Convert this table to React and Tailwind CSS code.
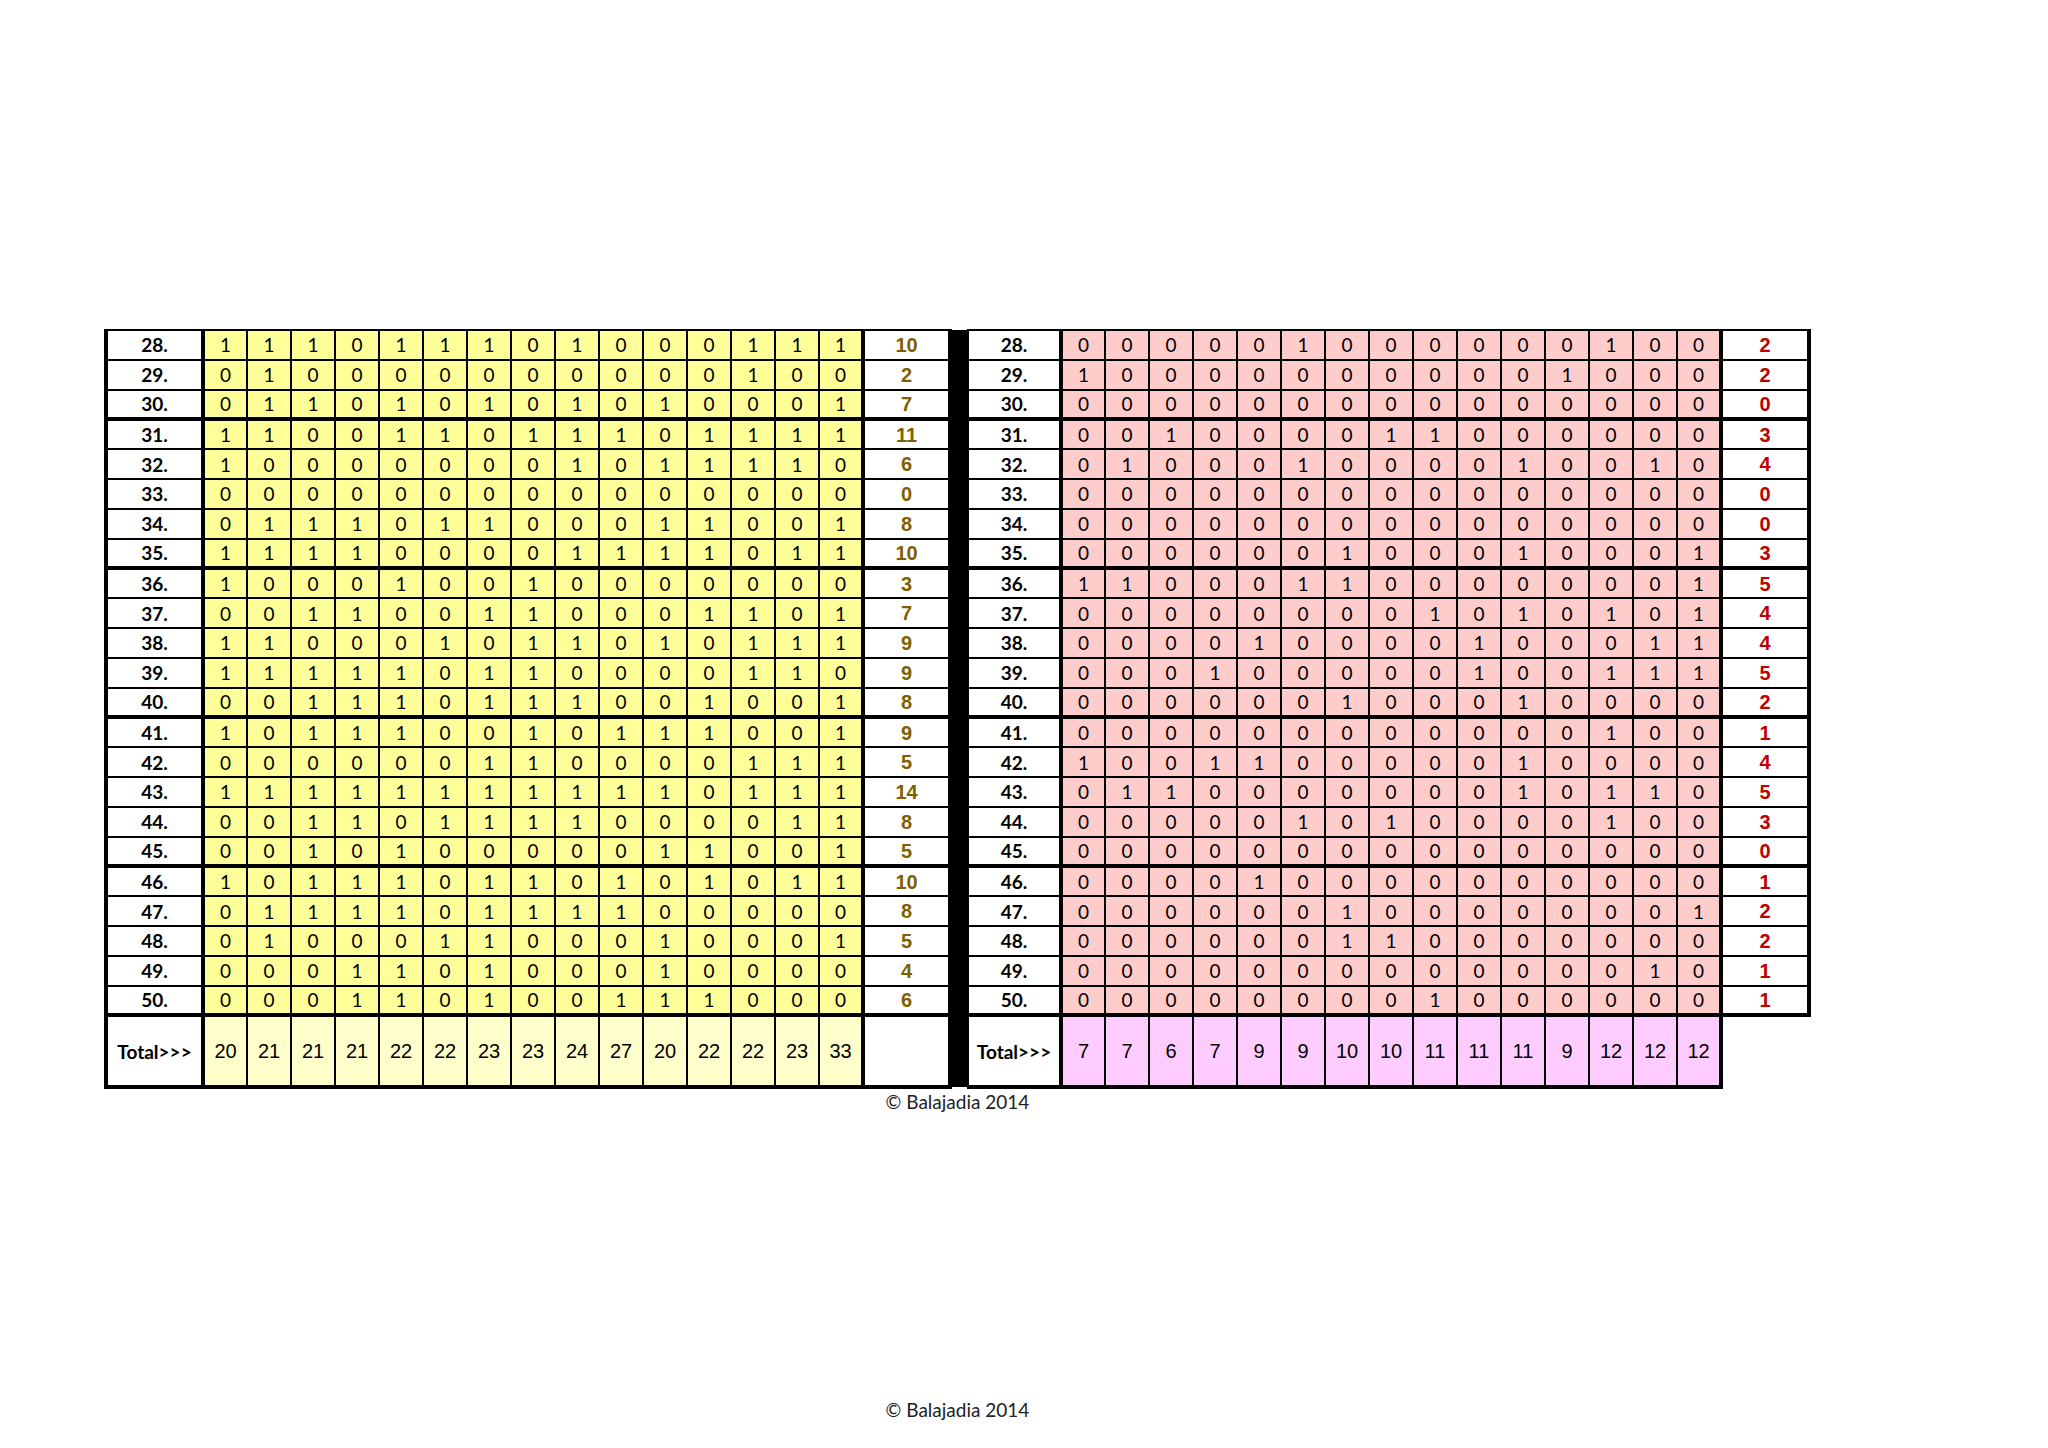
import React from "react";

const LEFT = [
  "111011101000111",
  "010000000000100",
  "011010101010001",
  "110011011101111",
  "100000001011110",
  "000000000000000",
  "011101100011001",
  "111100001111011",
  "100010010000000",
  "001100110001101",
  "110001011010111",
  "111110110000110",
  "001110111001001",
  "101110010111001",
  "000000110000111",
  "111111111110111",
  "001101111000011",
  "001010000011001",
  "101110110101011",
  "011110111100000",
  "010001100010001",
  "000110100010000",
  "000110100111000",
];

const RIGHT = [
  "000001000000100",
  "100000000001000",
  "000000000000000",
  "001000011000000",
  "010001000010010",
  "000000000000000",
  "000000000000000",
  "000000100010001",
  "110001100000001",
  "000000001010101",
  "000010000100011",
  "000100000100111",
  "000000100010000",
  "000000000000100",
  "100110000010000",
  "011000000010110",
  "000001010000100",
  "000000000000000",
  "000010000000000",
  "000000100000001",
  "000000110000000",
  "000000000000010",
  "000000001000000",
];

const LT = [20, 21, 21, 21, 22, 22, 23, 23, 24, 27, 20, 22, 22, 23, 33];
const RT = [7, 7, 6, 7, 9, 9, 10, 10, 11, 11, 11, 9, 12, 12, 12];

const GROUP_START = [3, 8, 13, 18];

const count = (s) => s.split("").filter((c) => c === "1").length;

const lato = { fontFamily: "Lato, 'Open Sans', sans-serif" };
const arial = { fontFamily: "'Liberation Sans', Arial, sans-serif" };
const narrow = { fontFamily: "'Liberation Sans Narrow', 'Liberation Sans', Arial, sans-serif" };

function Row({ i }) {
  const gs = GROUP_START.includes(i);
  const last = i === 22;
  const edge = gs ? " border-t-4" : last ? " border-b-4" : "";
  const label = `${28 + i}.`;
  return (
    <tr className="h-[29.8px]">
      <td
        className={
          "border-2 border-black border-l-4 border-r-4 bg-white text-center font-bold text-[19px] leading-none" +
          edge
        }
        style={lato}
      >
        {label}
      </td>
      {LEFT[i].split("").map((c, k) => (
        <td
          key={k}
          className={
            "border-2 border-black bg-[#ffff99] text-center text-[19px] leading-none text-black" +
            edge
          }
          style={lato}
        >
          {c}
        </td>
      ))}
      <td
        className={
          "border-2 border-black border-l-4 border-r-4 bg-white text-center font-bold text-[20px] leading-none text-[#7f6000]" +
          edge
        }
        style={arial}
      >
        {count(LEFT[i])}
      </td>
      {i === 0 && <td rowSpan={24} className="bg-black border-0 p-0"></td>}
      <td
        className={
          "border-2 border-black border-r-4 bg-white text-center font-bold text-[19px] leading-none" +
          edge
        }
        style={lato}
      >
        {label}
      </td>
      {RIGHT[i].split("").map((c, k) => (
        <td
          key={k}
          className={
            "border-2 border-black bg-[#ffcccc] text-center text-[19px] leading-none text-black" +
            edge
          }
          style={lato}
        >
          {c}
        </td>
      ))}
      <td
        className={
          "border-2 border-black border-l-4 border-r-4 bg-white text-center font-bold text-[20px] leading-none text-[#c00000]" +
          edge
        }
        style={arial}
      >
        {count(RIGHT[i])}
      </td>
    </tr>
  );
}

export default function App() {
  return (
    <div className="w-[2048px] h-[1448px] bg-white pt-[329px] pl-[104px] text-black">
      <div className="w-max">
        <table className="border-collapse table-fixed">
          <colgroup>
            <col className="w-[97px]" />
            {LT.map((_, k) => (
              <col key={"a" + k} className="w-[44px]" />
            ))}
            <col className="w-[87px]" />
            <col className="w-[18px]" />
            <col className="w-[93px]" />
            {RT.map((_, k) => (
              <col key={"b" + k} className="w-[44px]" />
            ))}
            <col className="w-[88px]" />
          </colgroup>
          <tbody>
            {LEFT.map((_, i) => (
              <Row key={i} i={i} />
            ))}
            <tr className="h-[72px]">
              <td
                className="border-4 border-black bg-white text-center font-bold text-[19px] leading-none"
                style={lato}
              >
                Total&gt;&gt;&gt;
              </td>
              {LT.map((t, k) => (
                <td
                  key={k}
                  className="border-2 border-black border-b-4 bg-[#ffffcc] text-center text-[20px] leading-none"
                  style={narrow}
                >
                  {t}
                </td>
              ))}
              <td className="border-4 border-black bg-white"></td>
              <td
                className="border-2 border-black border-r-4 border-b-4 bg-white text-center font-bold text-[19px] leading-none"
                style={lato}
              >
                Total&gt;&gt;&gt;
              </td>
              {RT.map((t, k) => (
                <td
                  key={k}
                  className={
                    "border-2 border-black border-b-4 bg-[#ffccff] text-center text-[20px] leading-none" +
                    (k === 14 ? " border-r-4" : "")
                  }
                  style={narrow}
                >
                  {t}
                </td>
              ))}
              <td className="border-0 bg-white"></td>
            </tr>
          </tbody>
        </table>
        <div className="text-center text-[19px] leading-[22px] mt-[2px] text-[#222]" style={lato}>
          © Balajadia 2014
        </div>
        <div className="text-center text-[19px] leading-[22px] mt-[286px] text-[#222]" style={lato}>
          © Balajadia 2014
        </div>
      </div>
    </div>
  );
}
